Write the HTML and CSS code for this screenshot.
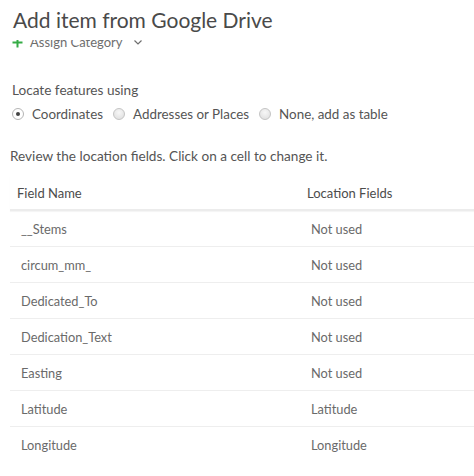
FILE: index.html
```html
<!DOCTYPE html>
<html>
<head>
<meta charset="utf-8">
<link rel="stylesheet" href="styles.css">
</head>
<body>
<div class="page">
  <div class="title">Add item from Google Drive</div>
  <div class="cat-clip">
    <div class="cat">
      <svg class="plus" width="11" height="11" viewBox="0 0 11 11"><path d="M5.5 0.5v10M0.5 5.5h10" stroke="#35ac46" stroke-width="2" fill="none"/></svg>
      <span>Assign Category</span>
      <svg class="chev" width="8" height="5" viewBox="0 0 8 5"><path d="M0.5 0.5l3.5 3.5 3.5-3.5" stroke="#6e6e6e" stroke-width="1.2" fill="none"/></svg>
    </div>
  </div>
  <div class="locate">Locate features using</div>
  <div class="radios">
    <label class="radio"><span class="dot on"></span>Coordinates</label>
    <label class="radio"><span class="dot"></span>Addresses or Places</label>
    <label class="radio"><span class="dot"></span>None, add as table</label>
  </div>
  <div class="review">Review the location fields. Click on a cell to change it.</div>
  <div class="table">
    <div class="thead"><div class="c1">Field Name</div><div class="c2">Location Fields</div></div>
    <div class="row"><div class="c1">__Stems</div><div class="c2">Not used</div></div>
    <div class="row"><div class="c1">circum_mm_</div><div class="c2">Not used</div></div>
    <div class="row"><div class="c1">Dedicated_To</div><div class="c2">Not used</div></div>
    <div class="row"><div class="c1">Dedication_Text</div><div class="c2">Not used</div></div>
    <div class="row"><div class="c1">Easting</div><div class="c2">Not used</div></div>
    <div class="row"><div class="c1">Latitude</div><div class="c2">Latitude</div></div>
    <div class="row last"><div class="c1">Longitude</div><div class="c2">Longitude</div></div>
  </div>
</div>
</body>
</html>
```
FILE: styles.css
```css
html, body { margin: 0; padding: 0; background: #fff; }
body { font-family: "Lato", "Noto Sans", sans-serif; color: #4c4c4c; overflow: hidden; }
.page { width: 474px; height: 476px; overflow: hidden; }
.title { height: 40px; box-sizing: border-box; padding: 7px 0 0 13px; font-size: 21px; color: #4a4a4a; line-height: 26px; }
.cat-clip { height: 10px; overflow: hidden; }
.cat { display: flex; align-items: center; gap: 7px; margin-top: -6px; padding-left: 12px; font-size: 13px; color: #6e6e6e; height: 16px; }
.chev { margin-left: 4px; }
.locate { margin-top: 31px; padding-left: 12px; font-size: 13.6px; line-height: 18px; color: #555; }
.radios { display: flex; gap: 10px; padding-left: 12px; margin-top: 6px; font-size: 13.4px; line-height: 18px; color: #555; }
.radio { display: flex; align-items: center; gap: 8px; }
.dot { width: 12px; height: 12px; border-radius: 50%; border: 1px solid #c4c4c4; background: radial-gradient(circle at 50% 35%, #f7f7f7, #dcdcdc); box-sizing: border-box; position: relative; }
.dot.on { background: #fff; border-color: #b5b5b5; }
.dot.on::after { content: ""; position: absolute; left: 3px; top: 3px; width: 4px; height: 4px; border-radius: 50%; background: #444; }
.review { margin-top: 24px; padding-left: 10px; font-size: 13.6px; line-height: 18px; color: #555; }
.table { margin-top: 11px; margin-left: 10px; }
.thead { display: flex; height: 35px; box-sizing: border-box; align-items: center; font-size: 13px; color: #4c4c4c; border-bottom: 2px solid #ececec; box-shadow: 0 1px 1px rgba(0,0,0,0.04); }
.thead .c1 { padding-left: 7px; width: 290px; }
.row { display: flex; height: 36px; box-sizing: border-box; align-items: center; font-size: 12.8px; color: #6a6a6a; border-bottom: 1px solid #eeeeee; }
.row .c1 { padding-left: 11px; width: 290px; }
.row.last { border-bottom: none; }
```
